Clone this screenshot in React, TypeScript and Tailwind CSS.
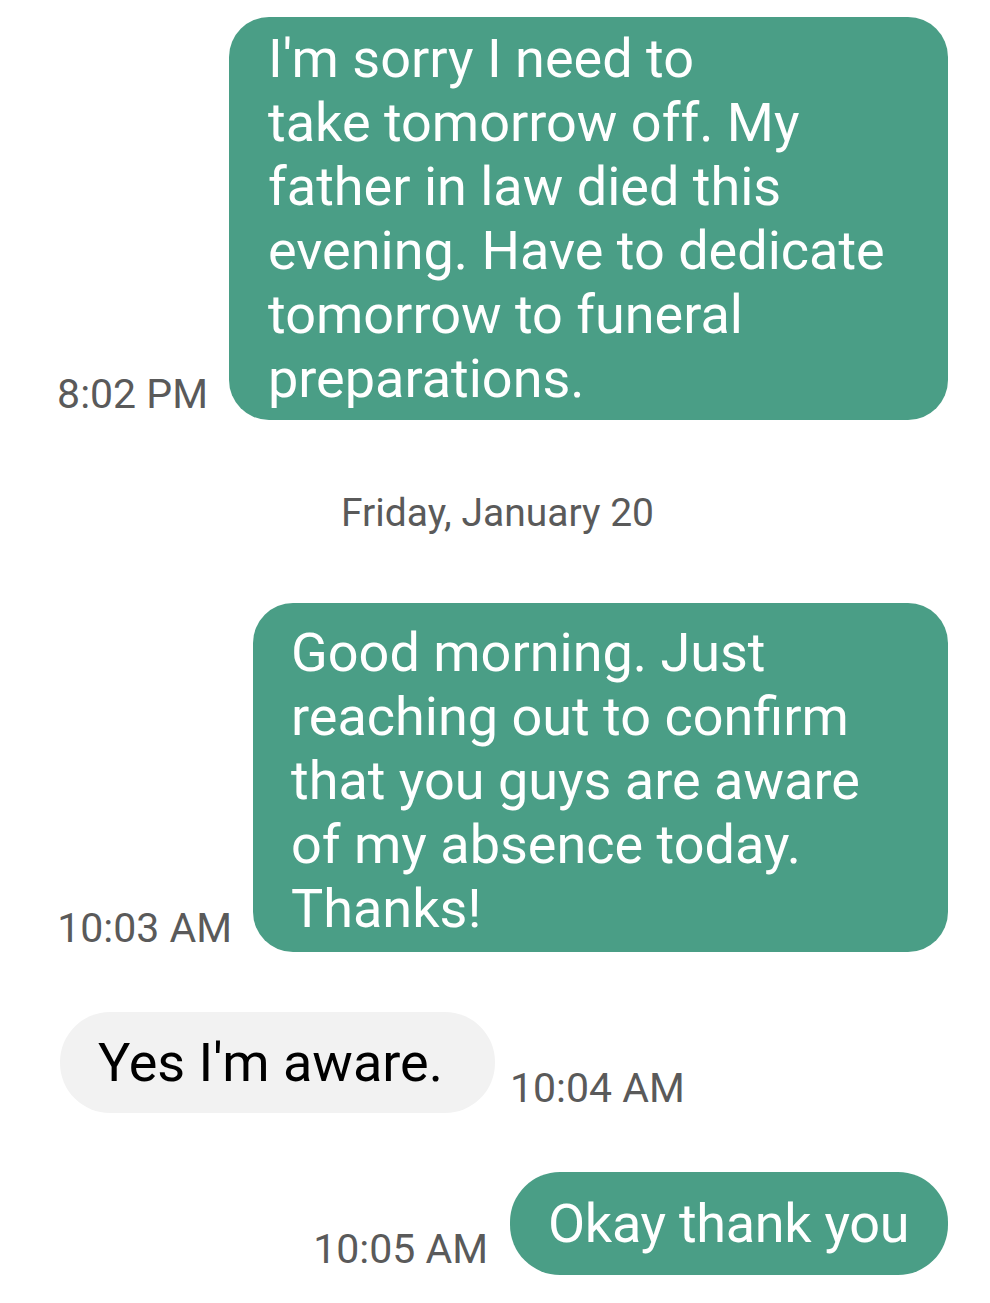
export default function App() {
  const font = { fontFamily: 'Roboto, "Noto Sans", sans-serif' } as const;
  return (
    <div className="min-h-[1303px] w-[990px] bg-white pl-[60px] pr-[42px] pt-[17px]" style={font}>
      <div className="flex items-end justify-end gap-[21px]">
        <span className="mb-[5px] whitespace-nowrap text-[41px] leading-none text-[#5a5a5a]">8:02 PM</span>
        <div className="w-[719px] shrink-0 rounded-[40px] bg-[#4a9e86] pb-[9px] pl-[39px] pr-[10px] pt-[10px] text-[54px] leading-[64px] text-white">
          I'm sorry I need to<br />take tomorrow off. My<br />father in law died this<br />evening. Have to dedicate<br />tomorrow to funeral<br />preparations.
        </div>
      </div>
      <div className="mt-[74px] pr-[13px] text-center text-[39px] leading-none text-[#5a5a5a]">Friday, January 20</div>
      <div className="mt-[70px] flex items-end justify-end gap-[21px]">
        <span className="mb-[3px] whitespace-nowrap text-[41px] leading-none text-[#5a5a5a]">10:03 AM</span>
        <div className="w-[695px] shrink-0 rounded-[40px] bg-[#4a9e86] pb-[11px] pl-[38px] pr-[10px] pt-[18px] text-[54px] leading-[64px] text-white">
          Good morning. Just<br />reaching out to confirm<br />that you guys are aware<br />of my absence today.<br />Thanks!
        </div>
      </div>
      <div className="mt-[60px] flex items-end gap-[15px]">
        <div className="h-[101px] w-[435px] shrink-0 whitespace-nowrap rounded-[50px] bg-[#f2f2f2] pl-[38px] text-[54px] leading-[101px] text-black">Yes I'm aware.</div>
        <span className="mb-[4px] whitespace-nowrap text-[41px] leading-none text-[#5a5a5a]">10:04 AM</span>
      </div>
      <div className="mt-[59px] flex items-end justify-end gap-[22px]">
        <span className="mb-[5px] whitespace-nowrap text-[41px] leading-none text-[#5a5a5a]">10:05 AM</span>
        <div className="h-[103px] w-[438px] shrink-0 whitespace-nowrap rounded-[50px] bg-[#4a9e86] pl-[38px] text-[54px] leading-[103px] tracking-[-0.3px] text-white">Okay thank you</div>
      </div>
    </div>
  );
}
